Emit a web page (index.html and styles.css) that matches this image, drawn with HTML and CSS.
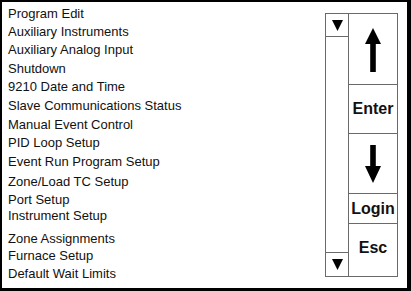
FILE: index.html
```html
<!DOCTYPE html>
<html>
<head>
<meta charset="utf-8">
<link rel="stylesheet" href="styles.css">
</head>
<body>
<div class="frame">
  <ul class="menu">
    <li class="h18 first">Program Edit</li>
    <li class="h18">Auxiliary Instruments</li>
    <li class="h19">Auxiliary Analog Input</li>
    <li class="h18">Shutdown</li>
    <li class="h19">9210 Date and Time</li>
    <li class="h19">Slave Communications Status</li>
    <li class="h18">Manual Event Control</li>
    <li class="h19">PID Loop Setup</li>
    <li class="h20">Event Run Program Setup</li>
    <li class="h18">Zone/Load TC Setup</li>
    <li class="h16">Port Setup</li>
    <li class="h23">Instrument Setup</li>
    <li class="h17">Zone Assignments</li>
    <li class="h18">Furnace Setup</li>
    <li class="h18">Default Wait Limits</li>
  </ul>
  <div class="controls">
    <div class="scroll">
      <div class="sbtn top"><svg width="11" height="11" viewBox="0 0 11 11"><polygon points="0,0 11,0 5.5,11" fill="#000"/></svg></div>
      <div class="track"></div>
      <div class="sbtn bottom"><svg width="11" height="11" viewBox="0 0 11 11"><polygon points="0,0 11,0 5.5,11" fill="#000"/></svg></div>
    </div>
    <div class="buttons">
      <div class="btn up"><svg width="16" height="44" viewBox="0 0 16 44"><polygon points="8,0 16,16 10.8,16 10.8,44 5.2,44 5.2,16 0,16" fill="#000"/></svg></div>
      <div class="btn enter">Enter</div>
      <div class="btn down"><svg width="16" height="38" viewBox="0 0 16 38"><polygon points="5.2,0 10.8,0 10.8,21 16,21 8,38 0,21 5.2,21" fill="#000"/></svg></div>
      <div class="btn login">Login</div>
      <div class="btn esc">Esc</div>
    </div>
  </div>
</div>
</body>
</html>
```
FILE: styles.css
```css
html, body {
  margin: 0;
  padding: 0;
  background: #fff;
}
.frame {
  box-sizing: border-box;
  width: 411px;
  height: 291px;
  border-style: solid;
  border-color: #000;
  border-width: 2px 4px 3px 2px;
  background: #fff;
  display: flex;
  font-family: "Liberation Sans", Arial, sans-serif;
  color: #111;
}
.menu {
  list-style: none;
  margin: 0;
  padding: 0 0 0 6px;
  flex: 1;
  font-size: 13px;
}
.menu li {
  line-height: 18px;
  white-space: nowrap;
}
.menu li.first { margin-top: 3px; }
.menu li.h16 { height: 16px; }
.menu li.h17 { height: 17px; }
.menu li.h18 { height: 18px; }
.menu li.h19 { height: 19px; }
.menu li.h20 { height: 20px; }
.menu li.h23 { height: 23px; }
.controls {
  margin: 11px 9px 11px 0;
  display: flex;
  border: 1.5px solid #6a6a6a;
}
.scroll {
  width: 22px;
  display: flex;
  flex-direction: column;
  border-right: 1.5px solid #6a6a6a;
}
.sbtn {
  height: 22px;
  display: flex;
  align-items: center;
  justify-content: center;
}
.sbtn.top { border-bottom: 1.5px solid #6a6a6a; }
.sbtn.bottom { border-top: 1.5px solid #6a6a6a; height: 23px; }
.track { flex: 1; }
.buttons {
  width: 48px;
  display: flex;
  flex-direction: column;
}
.btn {
  display: flex;
  align-items: center;
  justify-content: center;
  font-weight: bold;
  font-size: 16px;
  color: #111;
  box-sizing: border-box;
  border-bottom: 1.5px solid #6a6a6a;
}
.btn.up { height: 71px; padding-top: 2px; }
.btn.enter { height: 49px; }
.btn.down { height: 60px; }
.btn.login { height: 30px; }
.btn.esc { flex: 1; border-bottom: none; padding-bottom: 4px; }
```
